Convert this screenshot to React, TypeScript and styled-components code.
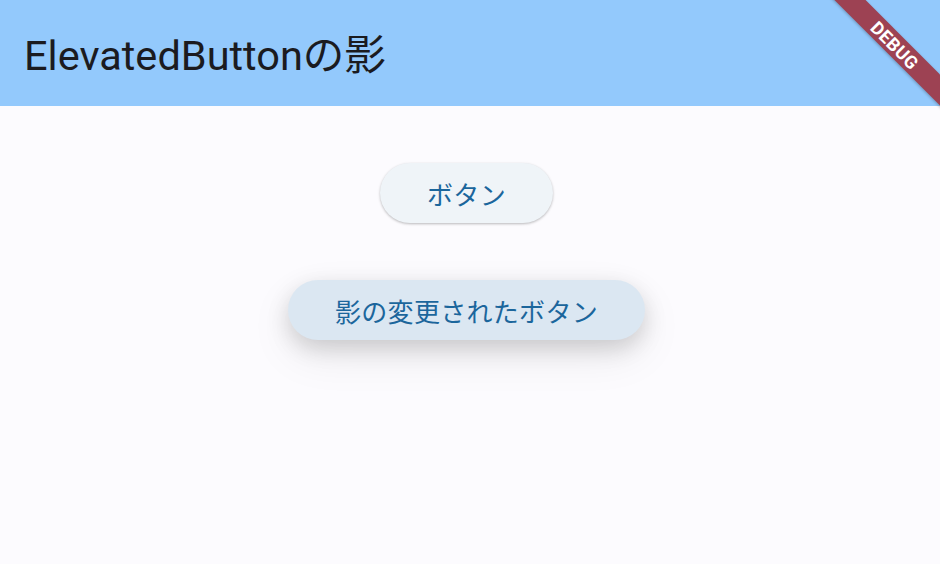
import React from "react";
import styled, { createGlobalStyle } from "styled-components";

const GlobalStyle = createGlobalStyle`
  html, body {
    margin: 0;
    padding: 0;
    background: #fcfbfe;
  }
  body {
    font-family: Roboto, "Noto Sans CJK JP", sans-serif;
  }
`;

const Screen = styled.div`
  position: relative;
  width: 940px;
  height: 564px;
  overflow: hidden;
  background: #fcfbfe;
`;

const AppBar = styled.header`
  height: 106px;
  background: #93c9fc;
  display: flex;
  align-items: center;
  padding: 0 24px;
  box-sizing: border-box;
`;

const Title = styled.h1`
  margin: 0;
  font-family: Roboto, "Noto Sans CJK JP", sans-serif;
  font-weight: 400;
  font-size: 41.5px;
  color: #1b1b1f;
  padding-bottom: 2px;
`;

const Body = styled.main`
  display: flex;
  flex-direction: column;
  align-items: center;
  gap: 57px;
  padding-top: 57px;
  padding-right: 7px;
`;

const ElevatedButton = styled.button<{ $raised?: boolean }>`
  height: 60px;
  padding: 0 47px;
  border: none;
  border-radius: 30px;
  font-family: "Noto Sans CJK JP", Roboto, sans-serif;
  font-size: 26px;
  letter-spacing: 0.3px;
  color: #1b669c;
  cursor: pointer;
  background: ${(p) => (p.$raised ? "#dbe7f2" : "#eff4f8")};
  box-shadow: ${(p) =>
    p.$raised
      ? "0 8px 22px rgba(0, 0, 0, 0.15), 0 16px 44px rgba(0, 0, 0, 0.08)"
      : "0 1px 3px rgba(0, 0, 0, 0.2), 0 1px 2px rgba(0, 0, 0, 0.08)"};
`;

const BannerClip = styled.div`
  position: absolute;
  top: 0;
  right: 0;
  width: 120px;
  height: 120px;
  overflow: hidden;
  pointer-events: none;
`;

const Band = styled.div`
  position: absolute;
  left: -25px;
  top: 34px;
  width: 200px;
  height: 22px;
  transform: rotate(45deg);
  background: #9d4253;
  box-shadow: 0 1px 3px rgba(0, 0, 0, 0.25);
  display: flex;
  align-items: center;
  justify-content: center;
  color: #ffffff;
  font-family: Roboto, "Liberation Sans", sans-serif;
  font-weight: 700;
  font-size: 18px;
  letter-spacing: 0.3px;
`;

export default function App() {
  return (
    <>
      <GlobalStyle />
      <Screen>
        <AppBar>
          <Title>ElevatedButtonの影</Title>
        </AppBar>
        <Body>
          <ElevatedButton>ボタン</ElevatedButton>
          <ElevatedButton $raised>影の変更されたボタン</ElevatedButton>
        </Body>
        <BannerClip>
          <Band>DEBUG</Band>
        </BannerClip>
      </Screen>
    </>
  );
}
